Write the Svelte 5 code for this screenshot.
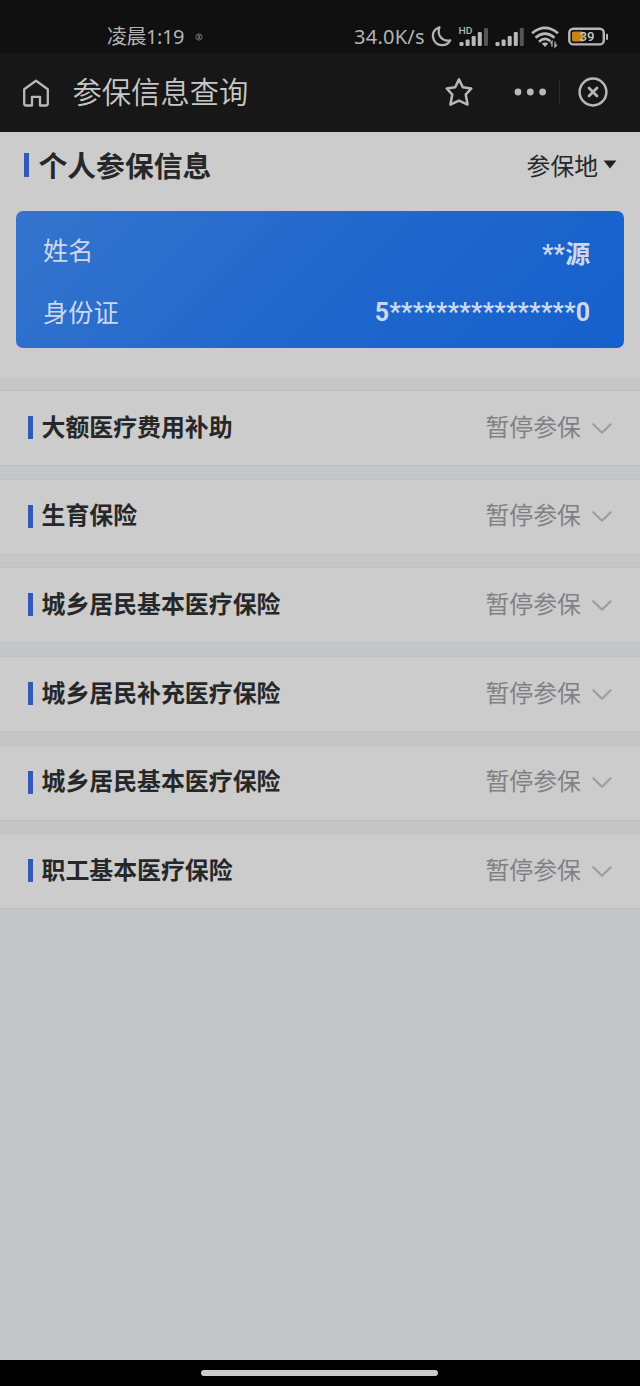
<script>
  const plans = [
    '大额医疗费用补助',
    '生育保险',
    '城乡居民基本医疗保险',
    '城乡居民补充医疗保险',
    '城乡居民基本医疗保险',
    '职工基本医疗保险'
  ];
  const idNumber = '5' + '*'.repeat(16) + '0';
</script>

<div class="screen">
  <div class="status-bar">
    <div class="clock">凌晨1:19</div>
    <svg class="tiny" width="8" height="8" viewBox="0 0 8 8" fill="none" stroke="#8a8a8a" stroke-width="0.7">
      <circle cx="4" cy="4" r="3.2" /><path d="M2.6 2.3h2.8L2.6 5.7h2.8L2.6 2.3" />
    </svg>
    <div class="speed">34.0K/s</div>
    <svg class="indicators" width="182" height="26" viewBox="0 0 182 26">
      <path d="M9.5 3.2C3.5 5 1.3 11 4 16.2C7.5 22.8 17 22.8 20.3 16.2C12.5 18 6.5 11.5 9.5 3.2Z" fill="none" stroke="#b4b4b4" stroke-width="2.2" stroke-linejoin="round" />
      <text x="28.4" y="9.8" font-size="9.5" font-weight="500" textLength="14" lengthAdjust="spacingAndGlyphs" fill="#b4b4b4">HD</text>
      <g fill="#b8b8b8">
        <rect x="29.5" y="18" width="4" height="4" rx="1.2" /><rect x="35.6" y="15.5" width="4" height="6.5" rx="1.2" />
        <rect x="41.7" y="12" width="4" height="10" rx="1.2" /><rect x="47.8" y="8" width="4" height="14" rx="1.2" />
        <rect x="65.5" y="18" width="4" height="4" rx="1.2" /><rect x="71.6" y="15.5" width="4" height="6.5" rx="1.2" />
        <rect x="77.7" y="12" width="4" height="10" rx="1.2" /><rect x="83.8" y="8" width="4" height="14" rx="1.2" />
      </g>
      <g fill="#555"><rect x="54" y="4" width="4" height="18" rx="1.2" /><rect x="89.8" y="4" width="4" height="18" rx="1.2" /></g>
      <g fill="none" stroke="#b8b8b8" stroke-width="2.6">
        <path d="M102 9.3Q115 -1.5 128 9.3" /><path d="M105.5 13.7Q115 5.7 124.5 13.7" /><path d="M109 17.7Q115 12.5 120.5 17.2" />
      </g>
      <path d="M111.8 19.6Q115 17.2 118.2 19.6L115 23Z" fill="#b8b8b8" />
      <path d="M122 22.8V17.5L120.5 19.2M125 17.5V22.8L127 20.5" fill="none" stroke="#b8b8b8" stroke-width="1.3" />
      <rect x="139.3" y="4.8" width="34.5" height="15.6" rx="4" fill="none" stroke="#b8b8b8" stroke-width="2.4" />
      <rect x="142" y="7.6" width="11.5" height="10" rx="1.5" fill="#c88412" />
      <path d="M177 10.8V15" stroke="#b8b8b8" stroke-width="2" stroke-linecap="round" />
      <text x="149.6" y="17" font-size="12.5" textLength="15" lengthAdjust="spacingAndGlyphs" font-weight="500" fill="#c8c8c8">39</text>
    </svg>
  </div>

  <header>
    <svg class="home" width="28" height="30" viewBox="0 0 28 30" fill="none" stroke="#b8b8b8" stroke-width="2.3" stroke-linejoin="round">
      <path d="M2.2 11.2L14 2.7L25.8 11.2V25.5Q25.8 27.5 24 27.5H18V18.8H10V27.5H4Q2.2 27.5 2.2 25.5Z" />
    </svg>
    <h1>参保信息查询</h1>
    <svg class="star" width="30" height="30" viewBox="0 0 30 30" fill="none" stroke="#b8b8b8" stroke-width="2.5" stroke-linejoin="round">
      <path d="M15 2.4L18.8 10.3L27.3 11.5L21.7 17.6L23.6 27.6L15 23.6L6.4 27.6L8.3 17.6L2.7 11.5L11.2 10.3Z" />
    </svg>
    <svg class="more" width="34" height="8" viewBox="0 0 34 8" fill="#b8b8b8">
      <circle cx="5" cy="4" r="3.4" /><circle cx="17.3" cy="4" r="3.4" /><circle cx="29.6" cy="4" r="3.4" />
    </svg>
    <span class="separator"></span>
    <svg class="close" width="32" height="32" viewBox="0 0 32 32" fill="none" stroke="#b8b8b8">
      <circle cx="16" cy="16" r="13.4" stroke-width="2.5" />
      <path d="M12 12L20 20M20 12L12 20" stroke-width="2.7" stroke-linecap="round" />
    </svg>
  </header>

  <section class="personal">
    <div class="heading">
      <span class="mark"></span>
      <h2>个人参保信息</h2>
      <div class="region">参保地<svg width="14" height="9" viewBox="0 0 14 9"><path d="M0.6 0.5H13.4L7 8.4Z" fill="#202020" /></svg></div>
    </div>
    <div class="card">
      <div class="field"><span>姓名</span><b class="name">**源</b></div>
      <div class="field"><span>身份证</span><b>{idNumber}</b></div>
    </div>
  </section>

  <main>
    {#each plans as plan}
      <div class="plan">
        <span class="mark"></span>
        <h3>{plan}</h3>
        <span class="state">暂停参保</span>
        <svg width="20" height="12" viewBox="0 0 20 12" fill="none" stroke="#9b9ca1" stroke-width="2" stroke-linecap="round" stroke-linejoin="round"><path d="M1.3 1.2L10 9.8L18.7 1.2" /></svg>
      </div>
    {/each}
  </main>

  <footer><span></span></footer>
</div>

<style>
  :global(body) { margin: 0; background: #000; }
  .screen {
    width: 640px; height: 1386px; display: flex; flex-direction: column; overflow: hidden;
    background: #c5c6c8; color: #262728;
    font-family: Roboto, "Noto Sans CJK SC", sans-serif;
  }
  h1, h2, h3 { margin: 0; white-space: nowrap; }
  svg { flex: none; display: block; }

  .status-bar {
    flex: none; height: 53px; box-sizing: border-box; padding: 20px 0 0 107px; display: flex; align-items: flex-start;
    background: #101010; color: #b4b4b4; font-family: "Noto Sans", "Noto Sans CJK SC", sans-serif; font-size: 20px; line-height: 34px;
  }
  .clock { width: 77px; letter-spacing: -0.45px; white-space: nowrap; }
  .tiny { margin: 13px 0 0 10.5px; }
  .speed { margin-left: 151.5px; width: 76px; font-size: 20px; letter-spacing: 0.25px; white-space: nowrap; }
  .indicators { margin: 4px 0 0; font-family: Roboto, sans-serif; }

  header {
    flex: none; height: 79px; box-sizing: border-box; padding-bottom: 1px; display: flex; align-items: center; background: #171717;
    font-family: "Noto Sans CJK SC", sans-serif;
  }
  .home { margin: 1px 0 0 22px; }
  h1 { width: 176px; margin: -5px 0 0 22.5px; color: #c8c8c8; font-size: 29.3px; line-height: 60px; font-weight: 350; }
  .star { margin-left: 195.5px; }
  .more { margin-left: 39px; }
  .separator { width: 1px; height: 26px; margin-left: 12px; background: #2c2c2c; }
  .close { margin-left: 17px; }

  .personal { flex: none; height: 246px; box-sizing: border-box; padding: 0 16px; background: #ccc; }
  .heading { height: 79px; display: flex; align-items: flex-start; }
  .mark { flex: none; width: 5px; height: 24px; background: #3159b8; }
  .heading .mark { margin: 21px 0 0 8px; }
  h2 { margin: 15px auto 0 9.5px; font-size: 28.8px; line-height: 40px; font-weight: 700; }
  .region { margin-top: 16px; padding-right: 7px; display: flex; gap: 5px; font-size: 23.8px; line-height: 38px; }
  .region svg { margin-top: 12px; }
  .card {
    height: 137px; box-sizing: border-box; padding: 22px 34px 0 27px; border-radius: 7px;
    background: linear-gradient(135deg, #3474cc 0%, #2067cc 55%, #1560cc 100%); color: #ced8e8;
  }
  .field { height: 62px; display: flex; justify-content: space-between; font-size: 25.2px; line-height: 38px; }
  .field b { font-size: 25px; letter-spacing: 0.3px; margin: -1px -0.5px 0 0; }
  .field .name { margin-top: 3px; }

  main { flex: 1; padding-top: 13.3px; display: flex; flex-direction: column; gap: 14.6px; }
  .plan {
    flex: none; height: 74px; box-sizing: border-box; padding: 0 28px 0 27.5px; display: flex; align-items: flex-start;
    background: #ccc; box-shadow: 0 0 2px #b2b4b6;
  }
  .plan .mark { margin-top: 25px; height: 23px; }
  h3 { margin: 17.6px auto 0 9px; font-size: 23.9px; line-height: 38px; font-weight: 700; }
  .state { margin: 17.6px 11px 0 0; color: #808185; font-size: 23.9px; line-height: 38px; }
  .plan svg { margin-top: 31.5px; }

  footer { flex: none; height: 26px; display: flex; justify-content: center; background: #000; }
  footer span { width: 237px; height: 6px; margin: 10px 1px 0 0; border-radius: 3px; background: #ccc; }
</style>
